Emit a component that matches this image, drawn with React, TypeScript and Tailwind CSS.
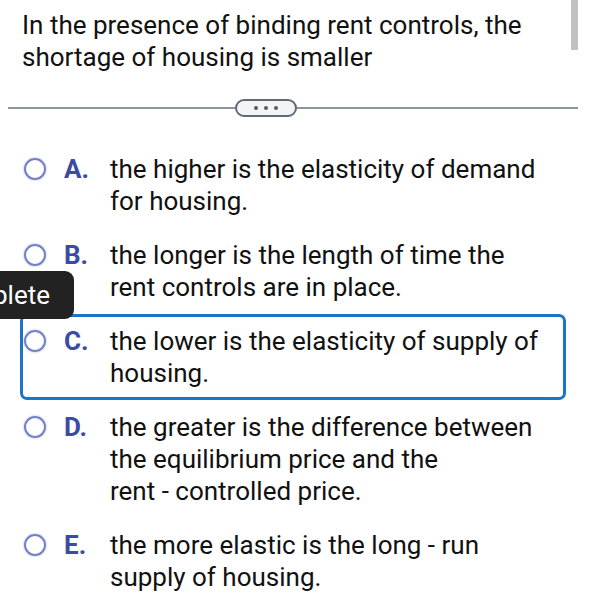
import React from 'react'

const options = [
  { key: 'A', lines: ['the higher is the elasticity of demand', 'for housing.'] },
  { key: 'B', lines: ['the longer is the length of time the', 'rent controls are in place.'] },
  { key: 'C', lines: ['the lower is the elasticity of supply of', 'housing.'], active: true },
  { key: 'D', lines: ['the greater is the difference between', 'the equilibrium price and the', 'rent - controlled price.'] },
  { key: 'E', lines: ['the more elastic is the long - run', 'supply of housing.'] },
]

export default function App() {
  return (
    <div
      className="relative w-[599px] h-[600px] overflow-hidden bg-white text-[#111111]"
      style={{ fontFamily: 'Roboto, "Liberation Sans", sans-serif' }}
    >
      {/* scrollbar thumb */}
      <div className="absolute right-[21px] top-0 w-[7px] h-[50px] bg-[#c1c1c1]" />

      <div className="pl-[22px] pt-[9px] pr-[40px] text-[26px] leading-[32px]">
        In the presence of binding rent controls, the shortage of housing is smaller
      </div>

      <div className="relative mt-[26px] ml-[8px] w-[570px] h-[18px] flex items-center">
        <div className="w-full h-[2px] bg-[#8d949b]" />
        <div className="absolute left-[227px] top-0 w-[62px] h-[18px] rounded-full border-2 border-[#5f6b78] bg-[#f2f4f6] flex items-center justify-center gap-[6px]">
          <span className="w-[4px] h-[4px] rounded-full bg-[#555b63]" />
          <span className="w-[4px] h-[4px] rounded-full bg-[#555b63]" />
          <span className="w-[4px] h-[4px] rounded-full bg-[#555b63]" />
        </div>
      </div>

      <div className="mt-[25px] flex flex-col">
        {options.map((o) => (
          <div
            key={o.key}
            className={
              'ml-[20px] w-[546px] flex items-start py-2 rounded-[7px] border-[3px] ' +
              (o.active ? 'border-[#1b75c4]' : 'border-transparent')
            }
          >
            <div className="h-[32px] flex items-center pl-px">
              <span className="w-[22px] h-[22px] rounded-full border-2 border-[#7281c6] shadow-[0_0_2px_rgba(90,105,190,0.6)]" />
            </div>
            <div className="ml-[18px] w-[46px] text-[26px] leading-[32px] font-bold text-[#3a4ba6]">{o.key}.</div>
            <div className="text-[26px] leading-[32px]">
              {o.lines.map((l, i) => (
                <div key={i}>{l}</div>
              ))}
            </div>
          </div>
        ))}
      </div>

      {/* tooltip, partly off the left edge */}
      <div className="absolute left-0 top-[271px] w-[74px] h-[48px] rounded-r-[9px] bg-[#222222] overflow-hidden flex items-center justify-end pr-[24px]">
        <span className="text-white text-[26px] leading-[32px] whitespace-nowrap">Complete</span>
      </div>
    </div>
  )
}
